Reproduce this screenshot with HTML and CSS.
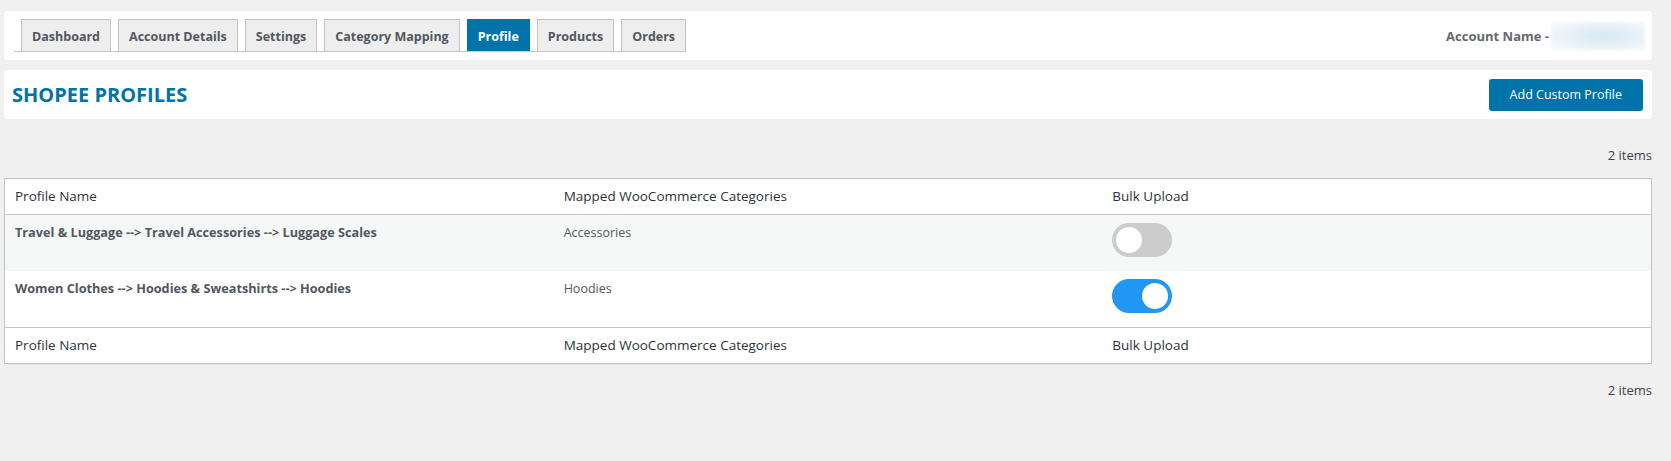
FILE: index.html
```html
<!DOCTYPE html>
<html lang="en">
<head>
<meta charset="utf-8">
<title>Shopee Profiles</title>
<link rel="stylesheet" href="styles.css">
</head>
<body>
<div class="wrap">
  <header class="panel topbar">
    <nav class="nav-tabs">
      <a class="tab" href="#">Dashboard</a>
      <a class="tab" href="#">Account Details</a>
      <a class="tab" href="#">Settings</a>
      <a class="tab" href="#">Category Mapping</a>
      <a class="tab tab-active" href="#">Profile</a>
      <a class="tab" href="#">Products</a>
      <a class="tab" href="#">Orders</a>
    </nav>
    <div class="account">
      <span class="account-label">Account Name -</span>
      <span class="account-blur"></span>
    </div>
  </header>

  <section class="panel titlebar">
    <h1 class="page-title">SHOPEE PROFILES</h1>
    <a class="button-primary" href="#">Add Custom Profile</a>
  </section>

  <div class="tablenav tablenav-top"><span class="displaying-num">2 items</span></div>

  <table class="profiles">
    <thead>
      <tr>
        <th>Profile Name</th>
        <th>Mapped WooCommerce Categories</th>
        <th>Bulk Upload</th>
      </tr>
    </thead>
    <tbody>
      <tr class="alt">
        <td class="name">Travel &amp; Luggage --&gt; Travel Accessories --&gt; Luggage Scales</td>
        <td class="cat">Accessories</td>
        <td><label class="switch"><input type="checkbox"><span class="slider"></span></label></td>
      </tr>
      <tr>
        <td class="name">Women Clothes --&gt; Hoodies &amp; Sweatshirts --&gt; Hoodies</td>
        <td class="cat">Hoodies</td>
        <td><label class="switch"><input type="checkbox" checked><span class="slider"></span></label></td>
      </tr>
    </tbody>
    <tfoot>
      <tr>
        <th>Profile Name</th>
        <th>Mapped WooCommerce Categories</th>
        <th>Bulk Upload</th>
      </tr>
    </tfoot>
  </table>

  <div class="tablenav tablenav-bottom"><span class="displaying-num">2 items</span></div>
</div>
</body>
</html>
```

FILE: styles.css
```css
* { box-sizing: border-box; }

html, body {
  margin: 0;
  padding: 0;
  background: #f0f0f1;
  font-family: "Open Sans", "Noto Sans", sans-serif;
  color: #3c434a;
}

.wrap {
  margin: 0 19px 0 4px;
  padding-top: 11px;
}

.panel {
  background: #fff;
  border-radius: 3px;
  display: flex;
  align-items: center;
  justify-content: space-between;
}

/* Top bar with tabs */
.topbar {
  height: 49px;
  padding: 8px 7px 8px 10px;
  align-items: flex-start;
}

.nav-tabs {
  display: flex;
  border-bottom: 1px solid #c3c4c7;
  height: 33px;
}

.tab {
  display: block;
  height: 32px;
  line-height: 29px;
  padding: 2px 10px 0;
  margin-left: 7px;
  border: 1px solid #c3c4c7;
  border-bottom: none;
  background: #eeeeee;
  color: #50575e;
  font-size: 12.5px;
  font-weight: 700;
  text-decoration: none;
  white-space: nowrap;
}

.tab-active {
  background: #0073aa;
  border-color: #0073aa;
  color: #fff;
}

.account {
  display: flex;
  align-items: center;
  height: 33px;
  align-self: center;
}

.account-label {
  font-size: 13px;
  font-weight: 700;
  color: #646970;
}

.account-blur {
  display: block;
  width: 94px;
  height: 28px;
  margin-left: 2px;
  background: radial-gradient(ellipse at 55% 50%, #d9e8f1 0%, #e6f0f6 45%, #f3f8fb 85%, #f7fafc 100%);
  filter: blur(1.5px);
}

/* Title bar */
.titlebar {
  margin-top: 10px;
  height: 49px;
  padding: 0 9px 0 8px;
}

.page-title {
  margin: 0;
  font-size: 20px;
  font-weight: 700;
  color: #0073aa;
  line-height: 1;
}

.button-primary {
  display: block;
  height: 32px;
  line-height: 32px;
  padding: 0 21px;
  background: #0073aa;
  color: #fff;
  border-radius: 3px;
  font-size: 12.5px;
  text-decoration: none;
}

/* Tablenav */
.tablenav {
  height: 30px;
  line-height: 30px;
  text-align: right;
  font-size: 13px;
  color: #3c434a;
}

.tablenav-top {
  margin: 21px 0 8px;
}

.tablenav-bottom {
  margin-top: 11px;
}

/* Table */
.profiles {
  width: 100%;
  table-layout: fixed;
  border-collapse: separate;
  border-spacing: 0;
  border: 1px solid #c3c4c7;
  background: #fff;
  box-shadow: 0 1px 1px rgba(0, 0, 0, 0.04);
}

.profiles th {
  text-align: left;
  font-weight: 400;
  font-size: 13.5px;
  color: #2c3338;
  padding: 8px 10px 9px;
  line-height: 18px;
}

.profiles thead th {
  border-bottom: 1px solid #c3c4c7;
}

.profiles tfoot th {
  border-top: 1px solid #c3c4c7;
}

.profiles td {
  vertical-align: top;
  padding: 8px 10px;
  font-size: 12.5px;
  line-height: 19px;
  color: #50575e;
}

.profiles tr.alt td {
  background: #f6f7f7;
}

.profiles td.name {
  font-weight: 700;
  font-size: 12.7px;
}

/* Toggle switch */
.switch {
  position: relative;
  display: block;
  width: 60px;
  height: 34px;
  margin-bottom: 6px;
}

.switch input {
  opacity: 0;
  width: 0;
  height: 0;
  position: absolute;
}

.slider {
  position: absolute;
  inset: 0;
  background: #ccc;
  border-radius: 34px;
  cursor: pointer;
}

.slider::before {
  content: "";
  position: absolute;
  width: 26px;
  height: 26px;
  left: 4px;
  bottom: 4px;
  background: #fff;
  border-radius: 50%;
}

.switch input:checked + .slider {
  background: #2196f3;
}

.switch input:checked + .slider::before {
  transform: translateX(26px);
}
```
